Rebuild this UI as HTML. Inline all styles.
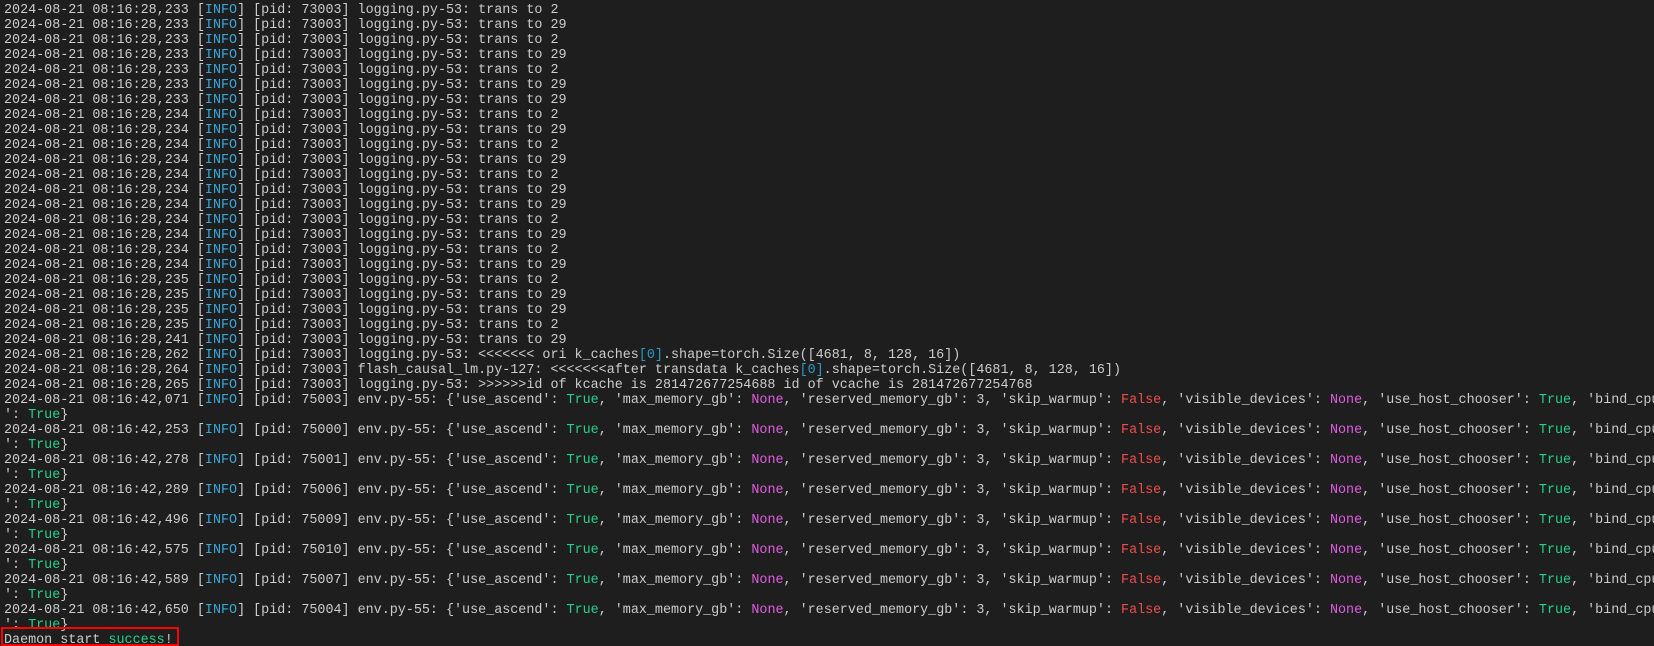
<!DOCTYPE html>
<html><head><meta charset="utf-8"><style>
html,body{margin:0;padding:0;background:#1e1e1e;width:1654px;height:646px;overflow:hidden}
pre{margin:0;padding:3px 0 0 4px;font-family:"Liberation Mono","DejaVu Sans Mono",monospace;font-size:13.4px;line-height:15px;color:#cccccc;white-space:pre;overflow:hidden}
.i{color:#3aa6d6}.c{color:#2a9bc6}.g{color:#23d18b}.m{color:#e05ce0}.r{color:#f14c4c}
.box{position:absolute;left:1px;top:627px;width:174px;height:15px;border:2px solid #ff0000}
</style></head><body>
<pre>2024-08-21 08:16:28,233 [<span class="i">INFO</span>] [pid: 73003] logging.py-53: trans to 2
2024-08-21 08:16:28,233 [<span class="i">INFO</span>] [pid: 73003] logging.py-53: trans to 29
2024-08-21 08:16:28,233 [<span class="i">INFO</span>] [pid: 73003] logging.py-53: trans to 2
2024-08-21 08:16:28,233 [<span class="i">INFO</span>] [pid: 73003] logging.py-53: trans to 29
2024-08-21 08:16:28,233 [<span class="i">INFO</span>] [pid: 73003] logging.py-53: trans to 2
2024-08-21 08:16:28,233 [<span class="i">INFO</span>] [pid: 73003] logging.py-53: trans to 29
2024-08-21 08:16:28,233 [<span class="i">INFO</span>] [pid: 73003] logging.py-53: trans to 29
2024-08-21 08:16:28,234 [<span class="i">INFO</span>] [pid: 73003] logging.py-53: trans to 2
2024-08-21 08:16:28,234 [<span class="i">INFO</span>] [pid: 73003] logging.py-53: trans to 29
2024-08-21 08:16:28,234 [<span class="i">INFO</span>] [pid: 73003] logging.py-53: trans to 2
2024-08-21 08:16:28,234 [<span class="i">INFO</span>] [pid: 73003] logging.py-53: trans to 29
2024-08-21 08:16:28,234 [<span class="i">INFO</span>] [pid: 73003] logging.py-53: trans to 2
2024-08-21 08:16:28,234 [<span class="i">INFO</span>] [pid: 73003] logging.py-53: trans to 29
2024-08-21 08:16:28,234 [<span class="i">INFO</span>] [pid: 73003] logging.py-53: trans to 29
2024-08-21 08:16:28,234 [<span class="i">INFO</span>] [pid: 73003] logging.py-53: trans to 2
2024-08-21 08:16:28,234 [<span class="i">INFO</span>] [pid: 73003] logging.py-53: trans to 29
2024-08-21 08:16:28,234 [<span class="i">INFO</span>] [pid: 73003] logging.py-53: trans to 2
2024-08-21 08:16:28,234 [<span class="i">INFO</span>] [pid: 73003] logging.py-53: trans to 29
2024-08-21 08:16:28,235 [<span class="i">INFO</span>] [pid: 73003] logging.py-53: trans to 2
2024-08-21 08:16:28,235 [<span class="i">INFO</span>] [pid: 73003] logging.py-53: trans to 29
2024-08-21 08:16:28,235 [<span class="i">INFO</span>] [pid: 73003] logging.py-53: trans to 29
2024-08-21 08:16:28,235 [<span class="i">INFO</span>] [pid: 73003] logging.py-53: trans to 2
2024-08-21 08:16:28,241 [<span class="i">INFO</span>] [pid: 73003] logging.py-53: trans to 29
2024-08-21 08:16:28,262 [<span class="i">INFO</span>] [pid: 73003] logging.py-53: &lt;&lt;&lt;&lt;&lt;&lt;&lt; ori k_caches<span class="c">[0]</span>.shape=torch.Size([4681, 8, 128, 16])
2024-08-21 08:16:28,264 [<span class="i">INFO</span>] [pid: 73003] flash_causal_lm.py-127: &lt;&lt;&lt;&lt;&lt;&lt;&lt;after transdata k_caches<span class="c">[0]</span>.shape=torch.Size([4681, 8, 128, 16])
2024-08-21 08:16:28,265 [<span class="i">INFO</span>] [pid: 73003] logging.py-53: &gt;&gt;&gt;&gt;&gt;&gt;id of kcache is 281472677254688 id of vcache is 281472677254768
2024-08-21 08:16:42,071 [<span class="i">INFO</span>] [pid: 75003] env.py-55: {'use_ascend': <span class="g">True</span>, 'max_memory_gb': <span class="m">None</span>, 'reserved_memory_gb': 3, 'skip_warmup': <span class="r">False</span>, 'visible_devices': <span class="m">None</span>, 'use_host_chooser': <span class="g">True</span>, 'bind_cpu
': <span class="g">True</span>}
2024-08-21 08:16:42,253 [<span class="i">INFO</span>] [pid: 75000] env.py-55: {'use_ascend': <span class="g">True</span>, 'max_memory_gb': <span class="m">None</span>, 'reserved_memory_gb': 3, 'skip_warmup': <span class="r">False</span>, 'visible_devices': <span class="m">None</span>, 'use_host_chooser': <span class="g">True</span>, 'bind_cpu
': <span class="g">True</span>}
2024-08-21 08:16:42,278 [<span class="i">INFO</span>] [pid: 75001] env.py-55: {'use_ascend': <span class="g">True</span>, 'max_memory_gb': <span class="m">None</span>, 'reserved_memory_gb': 3, 'skip_warmup': <span class="r">False</span>, 'visible_devices': <span class="m">None</span>, 'use_host_chooser': <span class="g">True</span>, 'bind_cpu
': <span class="g">True</span>}
2024-08-21 08:16:42,289 [<span class="i">INFO</span>] [pid: 75006] env.py-55: {'use_ascend': <span class="g">True</span>, 'max_memory_gb': <span class="m">None</span>, 'reserved_memory_gb': 3, 'skip_warmup': <span class="r">False</span>, 'visible_devices': <span class="m">None</span>, 'use_host_chooser': <span class="g">True</span>, 'bind_cpu
': <span class="g">True</span>}
2024-08-21 08:16:42,496 [<span class="i">INFO</span>] [pid: 75009] env.py-55: {'use_ascend': <span class="g">True</span>, 'max_memory_gb': <span class="m">None</span>, 'reserved_memory_gb': 3, 'skip_warmup': <span class="r">False</span>, 'visible_devices': <span class="m">None</span>, 'use_host_chooser': <span class="g">True</span>, 'bind_cpu
': <span class="g">True</span>}
2024-08-21 08:16:42,575 [<span class="i">INFO</span>] [pid: 75010] env.py-55: {'use_ascend': <span class="g">True</span>, 'max_memory_gb': <span class="m">None</span>, 'reserved_memory_gb': 3, 'skip_warmup': <span class="r">False</span>, 'visible_devices': <span class="m">None</span>, 'use_host_chooser': <span class="g">True</span>, 'bind_cpu
': <span class="g">True</span>}
2024-08-21 08:16:42,589 [<span class="i">INFO</span>] [pid: 75007] env.py-55: {'use_ascend': <span class="g">True</span>, 'max_memory_gb': <span class="m">None</span>, 'reserved_memory_gb': 3, 'skip_warmup': <span class="r">False</span>, 'visible_devices': <span class="m">None</span>, 'use_host_chooser': <span class="g">True</span>, 'bind_cpu
': <span class="g">True</span>}
2024-08-21 08:16:42,650 [<span class="i">INFO</span>] [pid: 75004] env.py-55: {'use_ascend': <span class="g">True</span>, 'max_memory_gb': <span class="m">None</span>, 'reserved_memory_gb': 3, 'skip_warmup': <span class="r">False</span>, 'visible_devices': <span class="m">None</span>, 'use_host_chooser': <span class="g">True</span>, 'bind_cpu
': <span class="g">True</span>}
Daemon start <span class="g">success</span>!</pre>
<div class="box"></div>
</body></html>
